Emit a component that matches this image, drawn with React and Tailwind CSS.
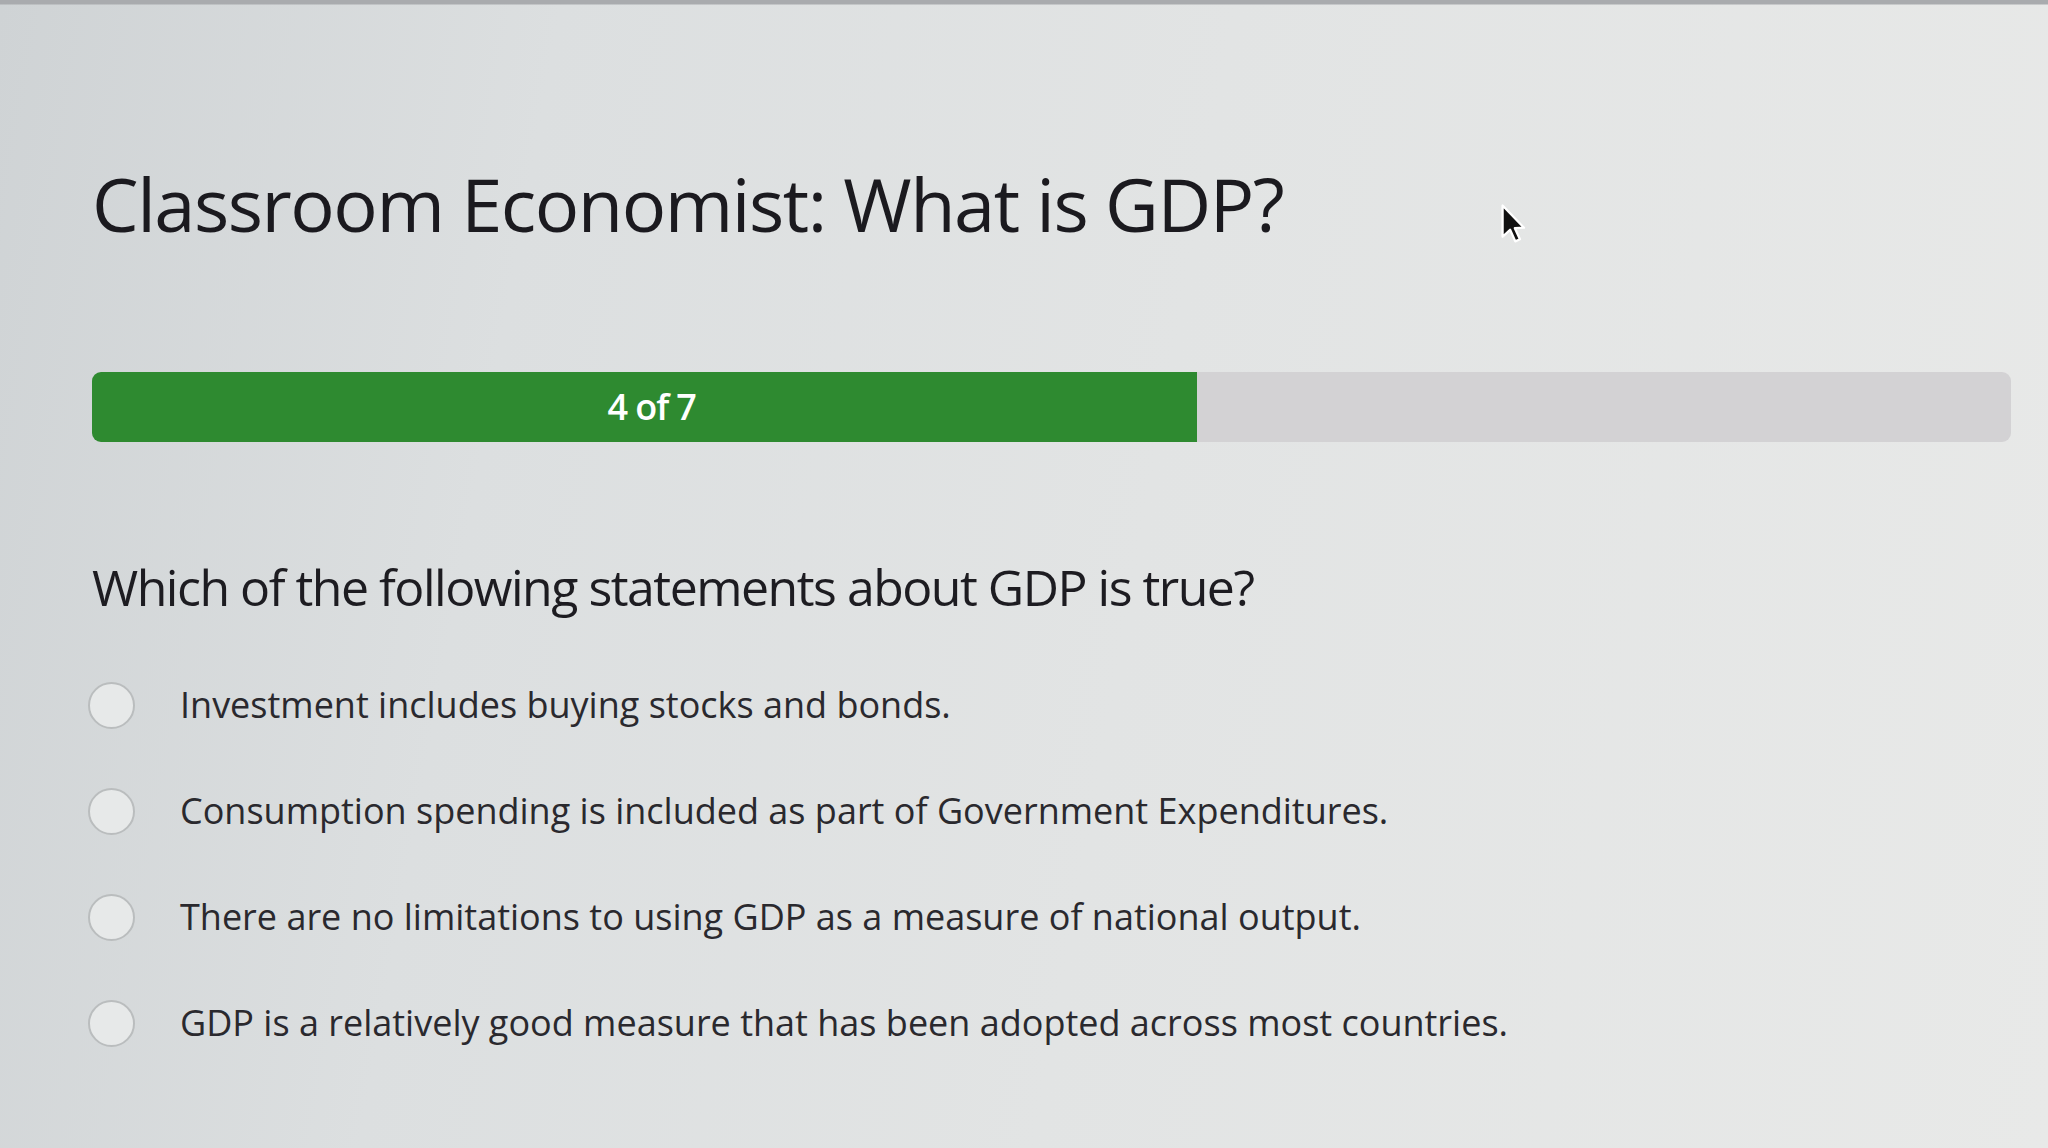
import React from "react";

const options = [
  "Investment includes buying stocks and bonds.",
  "Consumption spending is included as part of Government Expenditures.",
  "There are no limitations to using GDP as a measure of national output.",
  "GDP is a relatively good measure that has been adopted across most countries.",
];

function Cursor() {
  return (
    <svg
      className="absolute left-[1499px] top-[202px]"
      width="28"
      height="44"
      viewBox="0 0 24 38"
    >
      <path
        d="M3 3 L3 30 L9.5 24 L14 34 L18 32.2 L13.6 22.6 L21.5 22.2 Z"
        fill="#111"
        stroke="#fff"
        strokeWidth="2"
        strokeLinejoin="round"
      />
    </svg>
  );
}

export default function App() {
  return (
    <div
      className="relative w-[2048px] h-[1148px] overflow-hidden bg-[linear-gradient(180deg,#a9abae_0px,#a9abae_4px,rgba(0,0,0,0)_5px),linear-gradient(100deg,#cfd3d5_0%,#dcdfe0_25%,#e2e4e4_55%,#e8e9e8_100%)]"
      style={{ fontFamily: '"Open Sans", "Noto Sans", sans-serif' }}
    >
      <div className="flex flex-col pl-[92px] pr-[37px] pt-[167px]">
        <h1 className="text-[74px] leading-none font-normal tracking-[-0.02em] text-[#1b1a1f]">
          Classroom Economist: What is GDP?
        </h1>

        <div className="mt-[131px] flex h-[70px] w-full overflow-hidden rounded-[9px] bg-[#d3d2d4]">
          <div className="flex h-full w-[57.6%] items-center justify-center bg-[#2e8a30] pl-[14px]">
            <span className="text-[36px] leading-none font-semibold tracking-[-0.03em] text-white">
              4 of 7
            </span>
          </div>
        </div>

        <h2 className="mt-[120px] text-[50px] leading-none font-normal tracking-[-0.03em] text-[#1d1c21]">
          Which of the following statements about GDP is true?
        </h2>

        <div className="mt-[40px] -ml-[4px] flex flex-col">
          {options.map((o) => (
            <label key={o} className="flex h-[106px] items-center">
              <span className="h-[47px] w-[47px] shrink-0 rounded-full border-2 border-[#babdbe] bg-[#e7e9e9]" />
              <span className="ml-[45px] text-[36px] leading-none tracking-normal text-[#2a292e]">
                {o}
              </span>
            </label>
          ))}
        </div>
      </div>
      <Cursor />
    </div>
  );
}
